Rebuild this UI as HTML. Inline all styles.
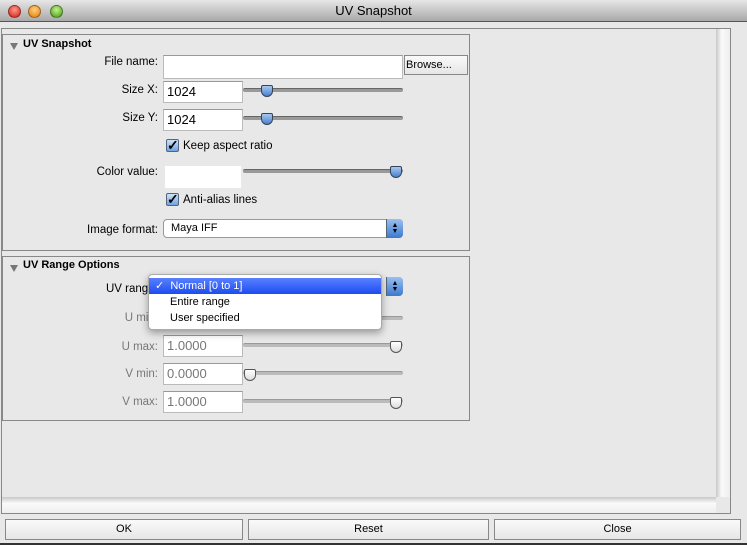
<!DOCTYPE html>
<html><head><style>
*{margin:0;padding:0;box-sizing:border-box}
body{width:747px;height:545px;overflow:hidden;background:#e8e8e8;font-family:"Liberation Sans",sans-serif;font-size:11px;color:#000;position:relative}
.a{position:absolute}
.title{left:0;top:0;width:747px;height:22px;background:linear-gradient(#e6e6e6,#a9a9a9);border-bottom:1px solid #555;text-align:center;font-size:13px;line-height:22px}
.dot{width:13px;height:13px;border-radius:50%;top:5px;border:1px solid rgba(0,0,0,.35)}
.panel{border:1px solid #888;}
.lbl{text-align:right;width:150px;font-size:11.5px}
.hdr{font-weight:bold;font-size:11px}
.tri{width:0;height:0;border-left:4px solid transparent;border-right:4px solid transparent;border-top:7px solid #777}
.field{background:#fff;border:1px solid #bbb;border-top-color:#999;font-size:13px;padding-left:3px;line-height:20px}
.track{height:4px;background:#999;border-radius:2px;border-top:1px solid #666}
.thumb{width:12px;height:12px;background:linear-gradient(#a8c8f0,#4a80d0);border:1px solid #345;border-radius:2px 2px 6px 6px}
.thumbg{width:12px;height:12px;background:linear-gradient(#fff,#ddd);border:1px solid #555;border-radius:2px 2px 6px 6px}
.cb{width:13px;height:13px;background:linear-gradient(#cfe3fa,#6fa2e4);border:1px solid #567;border-radius:2px;font-size:14px;line-height:10px;font-weight:bold}
.btn{background:linear-gradient(#fafafa,#e6e6e6);border:1px solid #888;text-align:center;line-height:19px;font-size:11px}
.pop{background:#fff;border:1px solid #999;border-radius:4px;font-size:11px}
.arr{background:linear-gradient(#9ac0f0,#3d78d0);border-left:1px solid #567;border-radius:0 4px 4px 0;font-size:7px;text-align:center;line-height:6px;color:#000}
.gray{color:#777}
</style></head><body>
<div class="a title">UV Snapshot</div>
<div class="a dot" style="left:8px;background:radial-gradient(circle at 50% 35%,#ff9a8a,#d21a12)"></div>
<div class="a dot" style="left:28px;background:radial-gradient(circle at 50% 35%,#ffd27a,#e07a08)"></div>
<div class="a dot" style="left:50px;background:radial-gradient(circle at 50% 35%,#c8f08a,#3a9a16)"></div>

<div class="a" style="left:1px;top:28px;width:730px;height:486px;border:1px solid #888"></div>
<div class="a" style="left:716px;top:29px;width:14px;height:468px;background:linear-gradient(90deg,#c8c8c8,#fafafa 40%,#eee)"></div>
<div class="a" style="left:2px;top:497px;width:714px;height:16px;background:linear-gradient(#c8c8c8,#fafafa 40%,#eee)"></div>

<div class="a panel" style="left:2px;top:34px;width:468px;height:217px"></div>
<div class="a tri" style="left:10px;top:43px"></div>
<div class="a hdr" style="left:23px;top:38px">UV Snapshot</div>

<div class="a lbl" style="left:8px;top:56px">File name:</div>
<div class="a field" style="left:163px;top:55px;width:240px;height:24px"></div>
<div class="a btn" style="left:404px;top:55px;width:64px;height:20px;text-align:left;padding-left:1px">Browse...</div>

<div class="a lbl" style="left:8px;top:84px">Size X:</div>
<div class="a field" style="left:163px;top:81px;width:80px;height:22px">1024</div>
<div class="a track" style="left:243px;top:88px;width:160px"></div>
<div class="a thumb" style="left:261px;top:85px"></div>

<div class="a lbl" style="left:8px;top:112px">Size Y:</div>
<div class="a field" style="left:163px;top:109px;width:80px;height:22px">1024</div>
<div class="a track" style="left:243px;top:116px;width:160px"></div>
<div class="a thumb" style="left:261px;top:113px"></div>

<div class="a cb" style="left:166px;top:139px">✓</div>
<div class="a" style="left:183px;top:140px;font-size:11.5px">Keep aspect ratio</div>

<div class="a lbl" style="left:8px;top:166px">Color value:</div>
<div class="a" style="left:165px;top:166px;width:76px;height:22px;background:#fff"></div>
<div class="a track" style="left:243px;top:169px;width:160px"></div>
<div class="a thumb" style="left:390px;top:166px"></div>

<div class="a cb" style="left:166px;top:193px">✓</div>
<div class="a" style="left:183px;top:194px;font-size:11.5px">Anti-alias lines</div>

<div class="a lbl" style="left:8px;top:224px">Image format:</div>
<div class="a pop" style="left:163px;top:219px;width:240px;height:19px;padding-left:7px;line-height:17px">Maya IFF</div>
<div class="a arr" style="left:386px;top:219px;width:17px;height:19px;padding-top:4px">▲<br>▼</div>

<div class="a panel" style="left:2px;top:256px;width:468px;height:165px"></div>
<div class="a tri" style="left:10px;top:265px"></div>
<div class="a hdr" style="left:23px;top:259px">UV Range Options</div>

<div class="a lbl" style="left:8px;top:283px;width:147px;text-align:left;padding-left:98px">UV range</div>
<div class="a arr" style="left:386px;top:277px;width:17px;height:19px;padding-top:4px">▲<br>▼</div>

<div class="a lbl gray" style="left:8px;top:312px">U min:</div>
<div class="a track" style="left:243px;top:316px;width:160px;background:#bbb;border-top-color:#999"></div>

<div class="a lbl gray" style="left:8px;top:341px">U max:</div>
<div class="a field gray" style="left:163px;top:335px;width:80px;height:22px">1.0000</div>
<div class="a track" style="left:243px;top:343px;width:160px;background:#bbb;border-top-color:#999"></div>
<div class="a thumbg" style="left:390px;top:341px"></div>

<div class="a lbl gray" style="left:8px;top:368px">V min:</div>
<div class="a field gray" style="left:163px;top:363px;width:80px;height:22px">0.0000</div>
<div class="a track" style="left:243px;top:371px;width:160px;background:#bbb;border-top-color:#999"></div>
<div class="a thumbg" style="left:244px;top:369px"></div>

<div class="a lbl gray" style="left:8px;top:396px">V max:</div>
<div class="a field gray" style="left:163px;top:391px;width:80px;height:22px">1.0000</div>
<div class="a track" style="left:243px;top:399px;width:160px;background:#bbb;border-top-color:#999"></div>
<div class="a thumbg" style="left:390px;top:397px"></div>

<div class="a" style="left:148px;top:274px;width:234px;height:56px;background:#fff;border:1px solid #aaa;border-radius:4px;box-shadow:0 3px 8px rgba(0,0,0,.35)"></div>
<div class="a" style="left:149px;top:278px;width:232px;height:16px;background:linear-gradient(#5a80ff,#1c4cf0);color:#fff;line-height:16px;padding-left:6px">✓ &nbsp;Normal [0 to 1]</div>
<div class="a" style="left:170px;top:296px">Entire range</div>
<div class="a" style="left:170px;top:312px">User specified</div>

<div class="a btn" style="left:5px;top:519px;width:238px;height:21px">OK</div>
<div class="a btn" style="left:248px;top:519px;width:241px;height:21px">Reset</div>
<div class="a btn" style="left:494px;top:519px;width:247px;height:21px">Close</div>
<div class="a" style="left:0;top:543px;width:747px;height:2px;background:#333"></div>
</body></html>
